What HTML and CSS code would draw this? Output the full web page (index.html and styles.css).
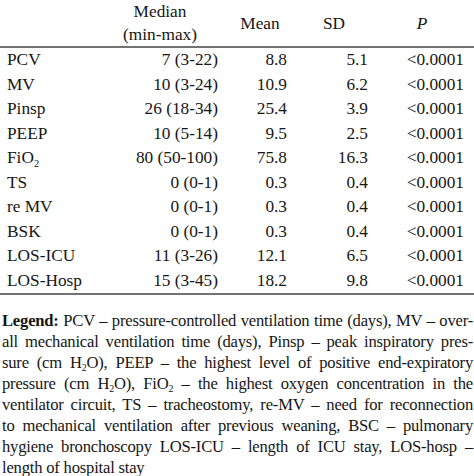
FILE: index.html
```html
<!DOCTYPE html>
<html>
<head>
<meta charset="utf-8">
<link rel="stylesheet" href="styles.css">
</head>
<body>
<div class="page">
  <div class="tbl">
    <div class="h c1"></div>
    <div class="h c2">Median<br>(min-max)</div>
    <div class="h c3">Mean</div>
    <div class="h c4">SD</div>
    <div class="h c5"><i>P</i></div>

    <div class="d c1">PCV</div><div class="d c2">7 (3-22)</div><div class="d c3">8.8</div><div class="d c4">5.1</div><div class="d c5">&lt;0.0001</div>
    <div class="d c1">MV</div><div class="d c2">10 (3-24)</div><div class="d c3">10.9</div><div class="d c4">6.2</div><div class="d c5">&lt;0.0001</div>
    <div class="d c1">Pinsp</div><div class="d c2">26 (18-34)</div><div class="d c3">25.4</div><div class="d c4">3.9</div><div class="d c5">&lt;0.0001</div>
    <div class="d c1">PEEP</div><div class="d c2">10 (5-14)</div><div class="d c3">9.5</div><div class="d c4">2.5</div><div class="d c5">&lt;0.0001</div>
    <div class="d c1">FiO<sub>2</sub></div><div class="d c2">80 (50-100)</div><div class="d c3">75.8</div><div class="d c4">16.3</div><div class="d c5">&lt;0.0001</div>
    <div class="d c1">TS</div><div class="d c2">0 (0-1)</div><div class="d c3">0.3</div><div class="d c4">0.4</div><div class="d c5">&lt;0.0001</div>
    <div class="d c1">re MV</div><div class="d c2">0 (0-1)</div><div class="d c3">0.3</div><div class="d c4">0.4</div><div class="d c5">&lt;0.0001</div>
    <div class="d c1">BSK</div><div class="d c2">0 (0-1)</div><div class="d c3">0.3</div><div class="d c4">0.4</div><div class="d c5">&lt;0.0001</div>
    <div class="d c1">LOS-ICU</div><div class="d c2">11 (3-26)</div><div class="d c3">12.1</div><div class="d c4">6.5</div><div class="d c5">&lt;0.0001</div>
    <div class="d c1 last">LOS-Hosp</div><div class="d c2 last">15 (3-45)</div><div class="d c3 last">18.2</div><div class="d c4 last">9.8</div><div class="d c5 last">&lt;0.0001</div>
  </div>

  <div class="legend">
    <span class="ln"><b>Legend:</b> PCV – pressure-controlled ventilation time (days), MV – over-</span>
    <span class="ln">all mechanical ventilation time (days), Pinsp – peak inspiratory pres-</span>
    <span class="ln">sure (cm H<sub>2</sub>O), PEEP – the highest level of positive end-expiratory</span>
    <span class="ln">pressure (cm H<sub>2</sub>O), FiO<sub>2</sub> – the highest oxygen concentration in the</span>
    <span class="ln">ventilator circuit, TS – tracheostomy, re-MV – need for reconnection</span>
    <span class="ln">to mechanical ventilation after previous weaning, BSC – pulmonary</span>
    <span class="ln">hygiene bronchoscopy LOS-ICU – length of ICU stay, LOS-hosp –</span>
    <span class="ln end">length of hospital stay</span>
  </div>
</div>
</body>
</html>
```

FILE: styles.css
```css
html, body {
  margin: 0;
  padding: 0;
  background: #ffffff;
}

.page {
  width: 474px;
  font-family: "Liberation Serif", "DejaVu Serif", serif;
  color: #161616;
}

.tbl {
  display: grid;
  grid-template-columns: 100px 126px 70px 78px 100px;
  width: 474px;
  font-size: 17.3px;
}

.h {
  height: 46px;
  line-height: 23px;
  border-bottom: 2px solid #727272;
  display: flex;
  align-items: center;
  justify-content: center;
  text-align: center;
}

.h.c1 { padding: 0; }
.h.c2 { padding-right: 6px; }
.h.c3 { padding-right: 2px; }
.h.c4 { padding-right: 2px; }
.h.c5 { padding-right: 4px; }

.d {
  height: 24.5px;
  line-height: 24.5px;
  text-align: right;
  white-space: nowrap;
}

.d.c1 { text-align: left; padding-left: 7px; }
.d.c2 { padding-right: 8px; }
.d.c3 { padding-right: 9px; }
.d.c4 { padding-right: 6px; }
.d.c5 { padding-right: 10px; }

.d.last {
  border-bottom: 2px solid #727272;
}

sub {
  font-size: 0.6em;
  line-height: 0;
  vertical-align: -0.35em;
}

.legend {
  margin-top: 15px;
  padding-left: 2px;
  width: 471px;
  font-size: 16.6px;
  line-height: 21px;
  letter-spacing: -0.2px;
}

.ln {
  display: block;
  text-align: justify;
  text-align-last: justify;
  white-space: nowrap;
}

.ln.end {
  text-align-last: left;
}

b {
  font-weight: bold;
}
```
